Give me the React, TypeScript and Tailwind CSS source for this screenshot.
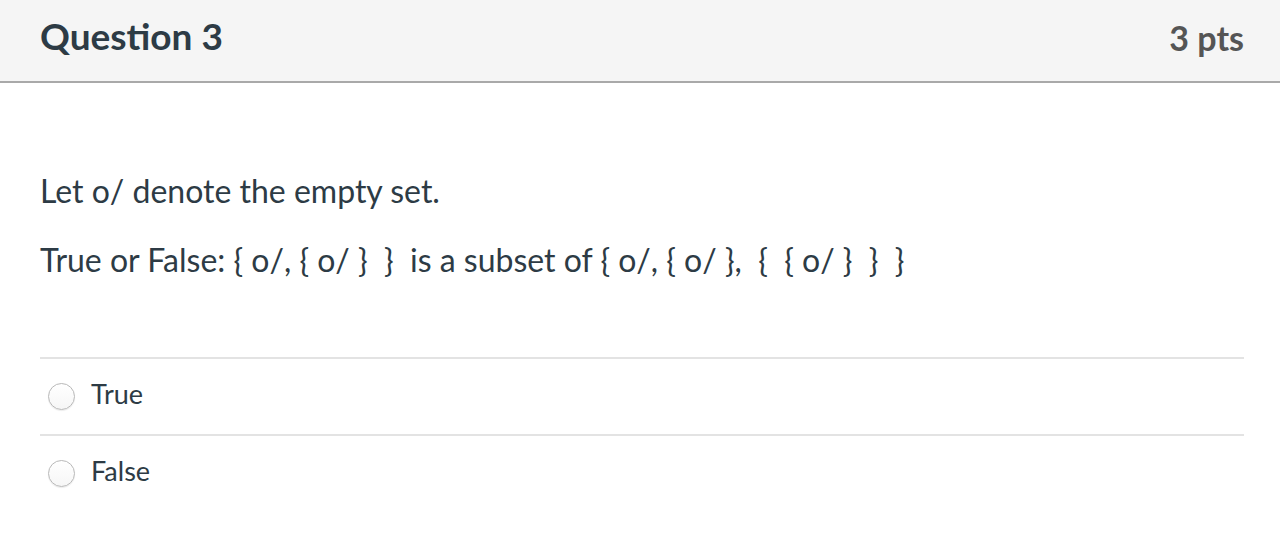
import React from "react";

const FONT = { fontFamily: "Lato, 'Helvetica Neue', Arial, sans-serif" };

function Radio() {
  return (
    <span className="inline-block h-[27px] w-[27px] shrink-0 rounded-full border border-[#b8b8b8] bg-gradient-to-b from-[#ffffff] to-[#f6f6f6] shadow-[0_1px_1px_rgba(0,0,0,0.08)]" />
  );
}

function Option({ label }: { label: string }) {
  return (
    <div className="flex h-[77px] items-center gap-[16px] border-t-2 border-[#e3e3e3] pl-[8px]">
      <Radio />
      <span className="mb-[6px] text-[27px] leading-[34px] text-[#2d3b45]">{label}</span>
    </div>
  );
}

export default function App() {
  return (
    <div className="min-h-[546px] bg-white" style={FONT}>
      <div className="flex h-[83px] items-center justify-between border-b-2 border-[#a9a9a9] bg-[#f5f5f5] pb-[10px] pl-[40px] pr-[36px]">
        <h2 className="text-[37px] font-bold leading-[44px] text-[#2d3b45]">Question 3</h2>
        <span className="mt-[4px] text-[34px] font-bold leading-[40px] text-[#555555]">3 pts</span>
      </div>
      <div className="pl-[40px] pr-[36px] pt-[89px]">
        <p className="text-[32px] leading-[38px] text-[#2d3b45]">Let o/ denote the empty set.</p>
        <p className="mt-[31px] whitespace-pre-wrap text-[32px] leading-[38px] text-[#2d3b45]">
          {"True or False: { o/, { o/ }  }  is a subset of { o/, { o/ },  {  { o/ }  }  }"}
        </p>
        <div className="mt-[78px]">
          <Option label="True" />
          <Option label="False" />
        </div>
      </div>
    </div>
  );
}
